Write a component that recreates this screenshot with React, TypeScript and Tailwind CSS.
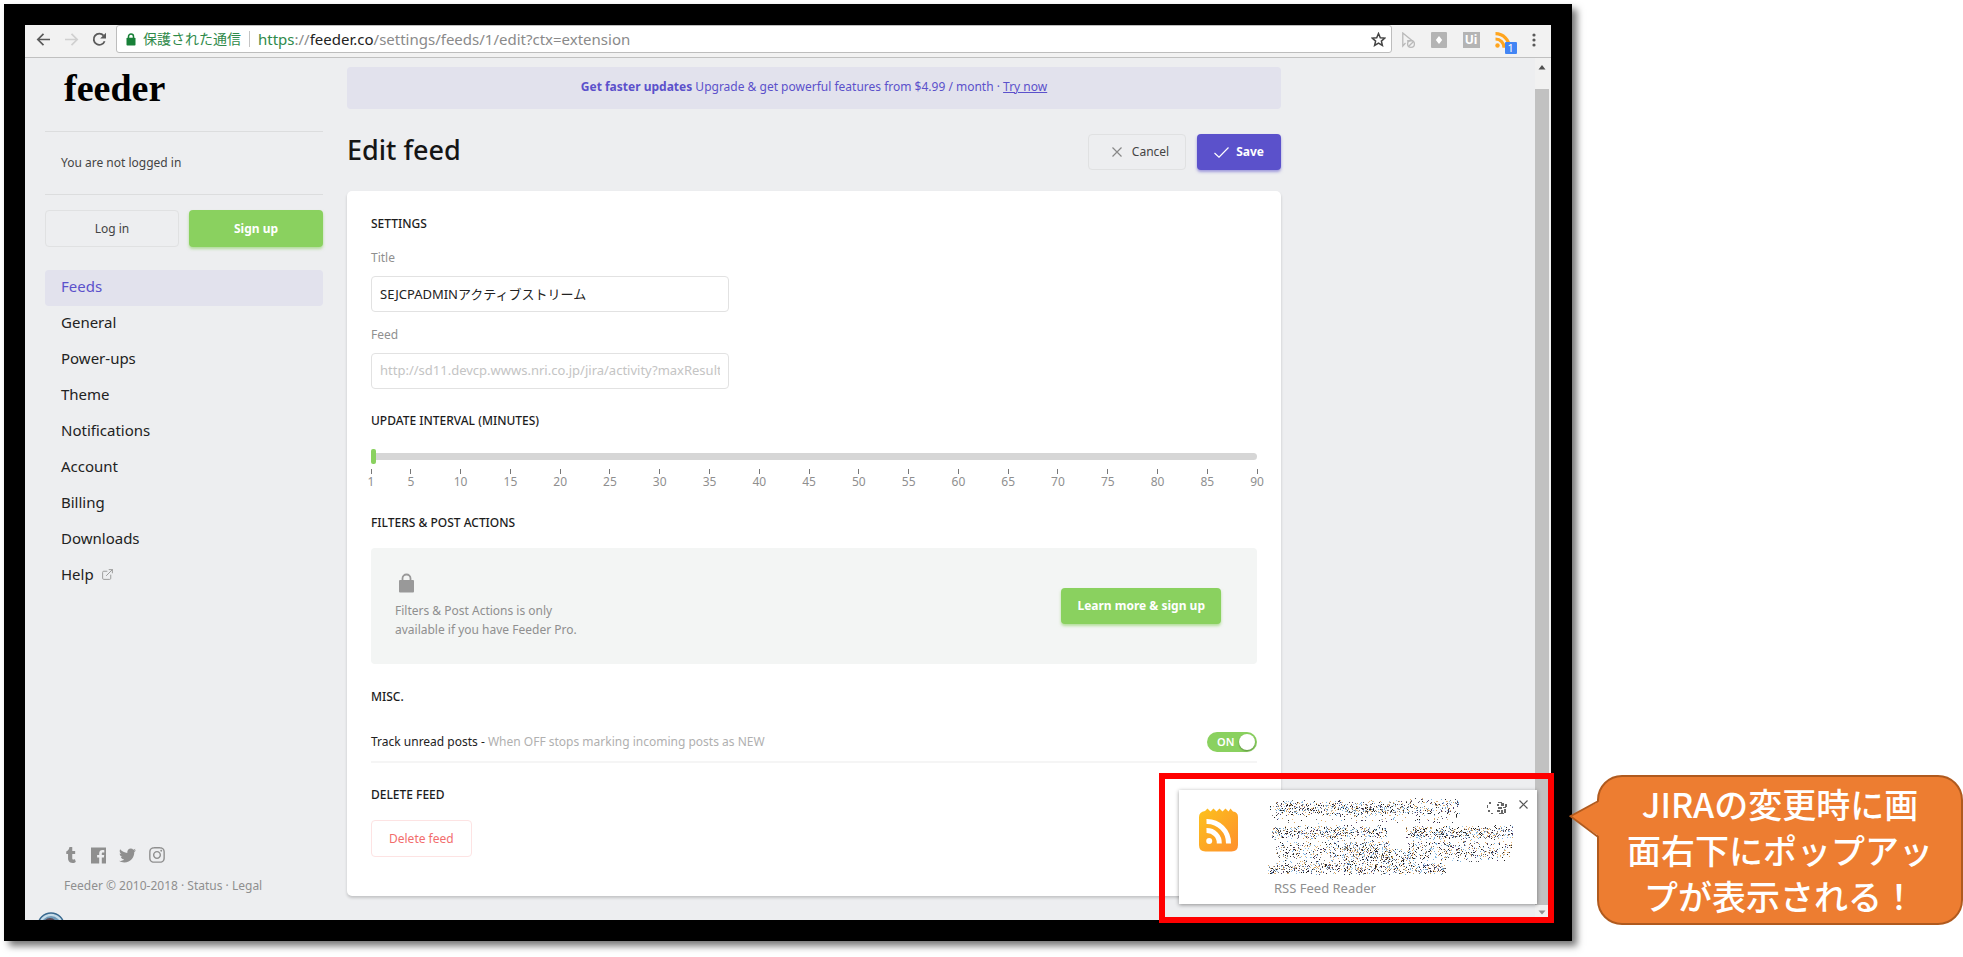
import React from "react";
import { ExternalLink } from "lucide-react";
import { FaTumblr, FaTwitter, FaInstagram } from "react-icons/fa";

const NAV = ["Feeds", "General", "Power-ups", "Theme", "Notifications", "Account", "Billing", "Downloads"];
const INTERVALS = [1, 5, 10, 15, 20, 25, 30, 35, 40, 45, 50, 55, 60, 65, 70, 75, 80, 85, 90];

function Toolbar() {
  return (
    <header className="flex h-[33px] items-start border-b border-[#c0c0c0] bg-[#f2f2f2] font-['Noto_Sans','Noto_Sans_CJK_JP',sans-serif]">
      <div className="flex h-8 w-[91px] shrink-0 items-start gap-[13px] pt-[7px] pl-[11px]">
        <button aria-label="Back">
          <svg width="15" height="15" viewBox="0 0 15 15" fill="none" stroke="#5a5a5a" strokeWidth="1.700">
            <path d="M14 7.500H2M7.500 1.800L1.800 7.500L7.500 13.200" />
          </svg>
        </button>
        <button aria-label="Forward">
          <svg width="15" height="15" viewBox="0 0 15 15" fill="none" stroke="#d0d0d0" strokeWidth="1.700">
            <path d="M1 7.500H13M7.500 1.800L13.200 7.500L7.500 13.200" />
          </svg>
        </button>
        <button aria-label="Reload">
          <svg width="15" height="15" viewBox="0 0 15 15" fill="none">
            <path d="M12.600 9.200A5.600 5.600 0 1 1 11.600 3.600" stroke="#5a5a5a" strokeWidth="1.800" />
            <path d="M14 0.800V6.600H8.200Z" fill="#5a5a5a" />
          </svg>
        </button>
      </div>
      <div className="flex h-[28px] min-w-0 flex-1 items-center rounded-[3px] border border-[#bdbdbd] bg-white pr-[5px] pl-[9px]">
        <svg width="10" height="13" viewBox="0 0 10 13" className="shrink-0">
          <path d="M2.500 6V3.500a2.500 2.500 0 0 1 5 0V6" fill="none" stroke="#188038" strokeWidth="1.500" />
          <rect x="0.500" y="4.800" width="9" height="7.700" rx="0.800" fill="#188038" />
        </svg>
        <span className="ml-[7px] text-[14px] leading-5 whitespace-nowrap text-[#2f8a4a]">保護された通信</span>
        <span className="ml-2 h-4 w-px bg-[#c4c4c4]" />
        <span className="ml-2 text-[15px] leading-5 whitespace-nowrap text-[#8a8a8a]">
          <span className="text-[#2f8a4a]">https</span>://<span className="text-[#222]">feeder.co</span>
          /settings/feeds/1/edit?ctx=extension
        </span>
        <button aria-label="Bookmark" className="ml-auto">
          <svg width="15" height="15" viewBox="0 0 15 15" fill="none" stroke="#444" strokeWidth="1.500">
            <path d="M7.500 1.500L9.300 5.700L13.800 6.100L10.400 9.100L11.400 13.500L7.500 11.200L3.600 13.500L4.600 9.100L1.200 6.100L5.700 5.700Z" />
          </svg>
        </button>
      </div>
      <div className="flex h-[30px] w-[159px] shrink-0 items-center justify-between pr-[15px] pl-[9px]">
        <svg width="15" height="17" viewBox="0 0 15 17" fill="none" stroke="#b9b9b9" strokeWidth="1.300">
          <path d="M6 9L11 8.500L1.800 1V14L4.500 11" />
          <circle cx="10" cy="12" r="3.400" />
          <path d="M7.700 14.300L12.300 9.700" />
        </svg>
        <svg width="16" height="16" viewBox="0 0 16 16">
          <rect width="16" height="16" rx="1" fill="#b4b4b4" />
          <path d="M8 4L11.200 8L8 12L4.800 8Z" fill="#fff" />
        </svg>
        <span className="flex h-4 w-[17px] items-center justify-center bg-[#b4b4b4] text-[12px] leading-4 font-bold text-white">Ui</span>
        <span className="relative h-4 w-[22px]">
          <svg width="16" height="16" viewBox="0 0 16 16" fill="none" stroke="#ffa51f" strokeWidth="3.200">
            <circle cx="2.500" cy="13.500" r="2.200" fill="#ffa51f" stroke="none" />
            <path d="M0.500 7A8.500 8.500 0 0 1 9 15.800M0.500 1.700A13.800 13.800 0 0 1 14.300 15.800" />
          </svg>
          <span className="absolute top-[10px] left-[10px] flex h-3 w-3 items-center justify-center rounded-[1px] bg-[#4285f4] text-[11px] leading-3 text-white">1</span>
        </span>
        <svg width="4" height="14" viewBox="0 0 4 14" fill="#5a5a5a">
          <circle cx="2" cy="2" r="1.600" />
          <circle cx="2" cy="7" r="1.600" />
          <circle cx="2" cy="12" r="1.600" />
        </svg>
      </div>
    </header>
  );
}

function Sidebar() {
  return (
    <aside className="flex w-[278px] shrink-0 flex-col">
      <div className="h-[73px] pt-2 pl-[19px]">
        <a href="#home" className="font-['Liberation_Serif',serif] text-[38px] leading-[44px] font-bold text-black">feeder</a>
      </div>
      <p className="border-y border-[#dcddde] py-[21px] pl-4 text-[12px] leading-5 text-[#444]">You are not logged in</p>
      <div className="mt-[15px] grid grid-cols-2 gap-[10px] text-[12px]">
        <button className="h-[37px] rounded-[4px] border border-[#e0e1e2] text-[#444]">Log in</button>
        <button className="h-[37px] rounded-[4px] bg-[#8ad15f] font-bold text-white shadow-[0_2px_3px_#8ad15f99]">Sign up</button>
      </div>
      <nav className="mt-[23px] flex flex-col text-[15px] text-[#222]">
        {NAV.map((item, i) => (
          <a
            key={item}
            href={"#" + item.toLowerCase()}
            className={
              i === 0
                ? "flex h-9 items-center rounded-[4px] bg-[#e2e2ed] px-4 pb-1 text-[#5b51cb]"
                : "flex h-9 items-center px-4 pb-1"
            }
          >
            {item}
          </a>
        ))}
        <a href="#help" className="flex h-9 items-center gap-[7px] px-4 pb-1">
          Help
          <ExternalLink size={13} strokeWidth={1.8} color="#9a9a9a" />
        </a>
      </nav>
      <footer className="mt-auto pl-[19px] text-[#8f8f8f]">
        <div className="flex items-center gap-3">
          <a href="#tumblr" aria-label="Tumblr" className="flex w-[14px] justify-center"><FaTumblr size={16} /></a>
          <a href="#facebook" aria-label="Facebook">
            <svg width="17" height="17" viewBox="0 0 17 17">
              <path fill="#8f8f8f" d="M1 0.500H16V16.500H11.800V10.600H13.900L14.200 8.100H11.800V6.600C11.800 5.900 12 5.400 13 5.400H14.300V3.200C14 3.100 13.300 3 12.400 3C10.500 3 9.200 4.200 9.200 6.300V8.100H7.100V10.600H9.200V16.500H1Z" />
            </svg>
          </a>
          <a href="#twitter" aria-label="Twitter"><FaTwitter size={17} /></a>
          <a href="#instagram" aria-label="Instagram"><FaInstagram size={18} /></a>
        </div>
        <p className="mt-3 text-[12px] leading-5">
          Feeder © 2010-2018 · <a href="#status">Status</a> · <a href="#legal">Legal</a>
        </p>
      </footer>
    </aside>
  );
}

function Heading({ children }: { children: React.ReactNode }) {
  return <h2 className="text-[12px] leading-5 font-medium text-[#1c1c1c] uppercase">{children}</h2>;
}

function IntervalScale() {
  return (
    <div className="mt-[5px] flex h-[21px] text-[12px] leading-4 text-[#8f8f8f]" aria-hidden="true">
      {INTERVALS.map((v, i) => (
        <div key={v} className="flex min-w-0 basis-0 justify-end" style={{ flexGrow: i === 0 ? 0 : v - INTERVALS[i - 1] }}>
          <div className="flex w-0 flex-col items-center">
            <span className="h-[5px] w-px bg-[#777]" />
            <span>{v}</span>
          </div>
        </div>
      ))}
    </div>
  );
}

function Settings() {
  const field = "mt-2 block h-9 w-[358px] rounded-[4px] border border-[#e2e2e2] bg-white px-2 pb-[2px] text-[13px]";
  return (
    <section className="mt-[21px] rounded-[5px] bg-white px-6 pt-[23px] pb-[39px] shadow-[0_2px_3px_#0000002e]">
      <Heading>Settings</Heading>
      <label htmlFor="title" className="mt-[14px] block text-[12px] leading-5 text-[#8f8f8f]">Title</label>
      <input id="title" className={field + " text-[#222]"} defaultValue="SEJCPADMINアクティブストリーム" />
      <label htmlFor="feed" className="mt-[13px] block text-[12px] leading-5 text-[#8f8f8f]">Feed</label>
      <input id="feed" readOnly className={field + " text-[#c4c4c4]"} defaultValue="http://sd11.devcp.wwws.nri.co.jp/jira/activity?maxResults=" />

      <div className="mt-[22px]"><Heading>Update interval (minutes)</Heading></div>
      <input
        type="range"
        min={1}
        max={90}
        defaultValue={1}
        aria-label="Update interval (minutes)"
        className="mt-[17px] block h-4 w-full appearance-none bg-transparent [&::-webkit-slider-runnable-track]:h-[7px] [&::-webkit-slider-runnable-track]:rounded-full [&::-webkit-slider-runnable-track]:bg-[#d6d6d6] [&::-webkit-slider-thumb]:-mt-1 [&::-webkit-slider-thumb]:h-[15px] [&::-webkit-slider-thumb]:w-[5px] [&::-webkit-slider-thumb]:appearance-none [&::-webkit-slider-thumb]:rounded-[2px] [&::-webkit-slider-thumb]:bg-[#8ad15f]"
      />
      <IntervalScale />

      <div className="mt-[23px]"><Heading>Filters &amp; post actions</Heading></div>
      <div className="mt-[15px] flex items-center justify-between rounded-[4px] bg-[#f3f5f4] pt-[25px] pr-9 pb-[25px] pl-6">
        <div>
          <svg width="24" height="20" viewBox="0 0 24 20" className="mb-2">
            <path d="M7.500 9V5.500a4 4 0 0 1 8 0V9" fill="none" stroke="#999" strokeWidth="1.800" />
            <rect x="4" y="7" width="15" height="12.500" rx="1" fill="#999" />
          </svg>
          <p className="text-[12px] leading-[19px] text-[#8f8f8f]">
            Filters &amp; Post Actions is only
            <br />
            available if you have Feeder Pro.
          </p>
        </div>
        <button className="h-9 rounded-[4px] bg-[#8ad15f] px-4 text-[12px] font-bold text-white shadow-[0_2px_3px_#8ad15f99]">
          Learn more &amp; sign up
        </button>
      </div>

      <div className="mt-[23px]"><Heading>Misc.</Heading></div>
      <div className="mt-[14px] flex h-[42px] items-center justify-between border-b-2 border-[#f5f5f5] pt-[2px]">
        <label htmlFor="track" className="text-[12px] leading-5 text-[#222]">
          Track unread posts - <span className="text-[#b0b0b0]">When OFF stops marking incoming posts as NEW</span>
        </label>
        <span className="relative h-5 w-[50px]">
          <input id="track" type="checkbox" defaultChecked className="block h-5 w-[50px] appearance-none rounded-full bg-[#bbb] checked:bg-[#8ad15f]" />
          <span className="pointer-events-none absolute top-0 left-[10px] text-[11px] leading-5 font-semibold text-white">ON</span>
          <span className="pointer-events-none absolute top-[2px] right-[2px] h-4 w-4 rounded-full bg-white shadow-[0_1px_2px_#00000055]" />
        </span>
      </div>

      <div className="mt-[22px]"><Heading>Delete feed</Heading></div>
      <button className="mt-[15px] block h-[37px] rounded-[4px] border border-[#fde3e3] px-[17px] text-[12px] text-[#f26d6d]">Delete feed</button>
    </section>
  );
}

function Main() {
  return (
    <main className="max-w-[934px] min-w-0 flex-1 pt-[9px]">
      <p className="rounded-[4px] bg-[#e2e2ed] pt-[10px] pb-3 text-center text-[12px] leading-5 text-[#5b51cb]">
        <b className="font-bold">Get faster updates</b> Upgrade &amp; get powerful features from $4.99 / month ·{" "}
        <a href="#upgrade" className="underline">Try now</a>
      </p>
      <div className="mt-[25px] flex h-9 items-center justify-between">
        <h1 className="pb-1 text-[27px] leading-8 font-medium text-[#151515]">Edit feed</h1>
        <div className="flex gap-[11px] text-[12px]">
          <button className="flex h-9 items-center gap-[10px] rounded-[4px] border border-[#e0e1e2] pr-4 pl-[23px] text-[#444]">
            <svg width="10" height="10" viewBox="0 0 10 10" stroke="#888" strokeWidth="1.200"><path d="M0.500 0.500L9.500 9.500M9.500 0.500L0.500 9.500" /></svg>
            Cancel
          </button>
          <button className="flex h-9 items-center gap-[7px] rounded-[4px] bg-[#5b51cb] px-[17px] font-bold text-white shadow-[0_2px_3px_#5b51cb88]">
            <svg width="15" height="11" viewBox="0 0 15 11" fill="none" stroke="#fff" strokeWidth="1.200"><path d="M0.500 6L5 10.200L14.500 0.500" /></svg>
            Save
          </button>
        </div>
      </div>
      <Settings />
    </main>
  );
}

function ScrollBar() {
  return (
    <div className="flex w-4 shrink-0 flex-col items-center bg-[#f1f1f1] pr-[2px]" aria-hidden="true">
      <svg width="14" height="31" viewBox="0 0 14 31"><path d="M7 7L10.500 11.500H3.500Z" fill="#505050" /></svg>
      <div className="w-[14px] flex-1 bg-[#c1c1c1]" />
      <svg width="14" height="15" viewBox="0 0 14 15"><path d="M7 9.500L10.500 5.500H3.500Z" fill="#909090" /></svg>
    </div>
  );
}

// Speckle bands that hide the notification's message: [x, y, width, height, count]
const BANDS: [number, number, number, number, number][] = [
  [8, 2, 129, 17, 620],
  [137, 0, 55, 20, 200],
  [2, 2, 8, 20, 10],
  [8, 18, 180, 8, 60],
  [4, 27, 115, 15, 480],
  [138, 27, 107, 16, 480],
  [8, 41, 72, 26, 270],
  [76, 41, 46, 26, 380],
  [118, 50, 28, 16, 90],
  [140, 41, 104, 24, 420],
  [0, 64, 178, 13, 640],
];
const INK = ["#3b3f4a", "#7db4e0", "#d9a866", "#54406b", "#9cc6ea", "#222222", "#777777", "#e3b983"];

function Speckles() {
  let seed = 7;
  const rnd = () => {
    seed = (seed * 16807) % 2147483647;
    return seed / 2147483647;
  };
  const paths = INK.map(() => "");
  for (const [x, y, w, h, n] of BANDS) {
    for (let i = 0; i < n; i++) {
      const px = Math.floor(x + rnd() * w);
      const py = Math.floor(y + (rnd() * 0.7 + rnd() * 0.3) * h);
      const c = Math.floor(rnd() * INK.length);
      paths[c] += `M${px} ${py}h1v1h-1z`;
    }
  }
  return (
    <svg width="250" height="80" viewBox="0 0 250 80" shapeRendering="crispEdges" aria-hidden="true">
      {paths.map((d, i) => (
        <path key={i} d={d} fill={INK[i]} />
      ))}
      <path
        d="M221 4h2v2h-2zM219 7h1v3h-1zM220 12h2v2h-2zM223 15h2v1h-2zM230 4h4v1h-4zM229 6h2v2h-2zM233 5h3v3h-3zM237 6h2v3h-2zM230 9h4v2h-4zM235 9h3v1h-3zM229 12h3v2h-3zM233 12h2v3h-2zM236 11h2v4h-2zM231 15h5v1h-5z"
        fill="#666"
      />
    </svg>
  );
}

function Notification() {
  return (
    <div className="absolute right-[-3px] bottom-[-3px] z-10 border-[6px] border-[#ff0000] pt-[11px] pr-[11px] pb-[13px] pl-[14px]">
      <div className="flex h-[114px] w-[358px] bg-white pr-2 pl-5 shadow-[0_1px_4px_#00000066]">
        <svg width="39" height="44" viewBox="0 0 39 44" className="mt-[18px] shrink-0">
          <defs>
            <linearGradient id="rss" x1="0" y1="0" x2="1" y2="1">
              <stop offset="0" stopColor="#fcc21b" />
              <stop offset="1" stopColor="#ff8f2e" />
            </linearGradient>
          </defs>
          <path d="M0 9Q0 4 6 3L8.500 0.500L11.500 3.500L14.500 0.500L17.500 3.500L20.500 0.500L23.500 3.500L26.500 0.500L29.500 3.500L31.500 0.500L34 3.500Q39 4 39 9V37Q39 43.500 32.500 43.500H6.500Q0 43.500 0 37Z" fill="url(#rss)" />
          <circle cx="10.200" cy="33" r="3" fill="#fff" />
          <path d="M7.500 22.500A12.500 12.500 0 0 1 20.300 35.500M7.500 13.500A21.500 21.500 0 0 1 29.500 35.500" fill="none" stroke="#fff" strokeWidth="5" />
        </svg>
        <div className="ml-[30px] w-[251px] pt-2">
          <Speckles />
          <p className="pl-[6px] font-['Noto_Sans',sans-serif] text-[13px] leading-5 text-[#8f8f8f]">RSS Feed Reader</p>
        </div>
        <button aria-label="Close" className="mt-[10px] flex h-[9px] items-center">
          <svg width="9" height="9" viewBox="0 0 9 9" stroke="#555" strokeWidth="1.200"><path d="M0.500 0.500L8.500 8.500M8.500 0.500L0.500 8.500" /></svg>
        </button>
      </div>
    </div>
  );
}

function Callout() {
  return (
    <div className="relative mt-[771px] ml-[25px] h-[150px] flex-1 rounded-[25px] border-2 border-[#b05a1e] bg-[#ed7d31] pt-1 text-center font-['Noto_Sans_CJK_JP',sans-serif] text-[34px] leading-[46px] font-medium whitespace-nowrap text-white">
      <svg width="31" height="38" viewBox="0 0 31 38" className="absolute top-[23px] left-[-30px]">
        <path d="M31 1L1 16L31 37" fill="#ed7d31" />
        <path d="M28.500 1.500L1.500 16.200L28.500 36.500" fill="none" stroke="#b05a1e" strokeWidth="1.800" />
      </svg>
      JIRAの変更時に画
      <br />
      面右下にポップアッ
      <br />
      プが表示される！
    </div>
  );
}

export default function App() {
  return (
    <div className="flex min-h-screen items-start overflow-hidden bg-white pt-1 pl-1 font-['Noto_Sans','Noto_Sans_CJK_JP',sans-serif]">
      <div className="min-w-0 flex-1 bg-black p-[21px] shadow-[5px_5px_7px_#00000088]">
        <div className="relative">
          <Toolbar />
          <div className="relative flex bg-[#edeef0]">
            <div className="flex min-w-0 flex-1 gap-6 overflow-hidden pb-6 pl-5">
              <Sidebar />
              <Main />
            </div>
            <ScrollBar />
            <svg width="28" height="8" viewBox="0 0 28 8" className="absolute bottom-0 left-3" aria-hidden="true">
              <circle cx="14" cy="14" r="13" fill="#c6dbe8" stroke="#39698f" strokeWidth="1.500" />
              <circle cx="14" cy="14" r="10" fill="#6f9ab8" />
              <circle cx="13" cy="13" r="7" fill="#5c4550" />
            </svg>
          </div>
          <Notification />
        </div>
      </div>
      <div className="flex w-[391px] shrink-0">
        <Callout />
      </div>
    </div>
  );
}
